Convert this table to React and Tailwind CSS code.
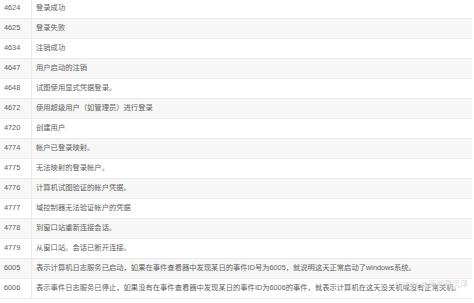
import React from 'react';

const rows = [
    ['4624', '登录成功'],
    ['4625', '登录失败'],
    ['4634', '注销成功'],
    ['4647', '用户启动的注销'],
    ['4648', '试图使用显式凭据登录。'],
    ['4672', '使用超级用户（如管理员）进行登录'],
    ['4720', '创建用户'],
    ['4774', '帐户已登录映射。'],
    ['4775', '无法映射的登录帐户。'],
    ['4776', '计算机试图验证的帐户凭据。'],
    ['4777', '域控制器无法验证帐户的凭据'],
    ['4778', '到窗口站重新连接会话。'],
    ['4779', '从窗口站。会话已断开连接。'],
    ['6005', '表示计算机日志服务已启动，如果在事件查看器中发现某日的事件ID号为6005，就说明这天正常启动了windows系统。'],
    ['6006', '表示事件日志服务已停止，如果没有在事件查看器中发现某日的事件ID为6006的事件，就表示计算机在这天没关机或没有正常关机。'],
];

const App = () => {
    return (
        <div className="relative w-[474px] h-[303px] overflow-hidden bg-white font-['Liberation_Sans','Noto_Sans_CJK_SC',sans-serif] text-[7.3px] text-[#606060]">
            <div className="w-[472px] -mt-px">
                {rows.map(([id, desc], i) => (
                    <div
                        key={id}
                        className={`flex h-[20px] items-center border-b border-[#ececec] ${i % 2 === 1 ? 'bg-[#f7f7f7]' : 'bg-white'}`}
                    >
                        <div className="w-[32px] h-full flex items-center pl-[4px] border-r border-[#ececec]">{id}</div>
                        <div className="pl-[4px] whitespace-nowrap">{desc}</div>
                    </div>
                ))}
            </div>
            <div className="absolute right-[6px] bottom-[12px] text-[8px] text-[#d8d8d8]">CSDN @潇湘静沉浮</div>
        </div>
    );
};

export default App;
